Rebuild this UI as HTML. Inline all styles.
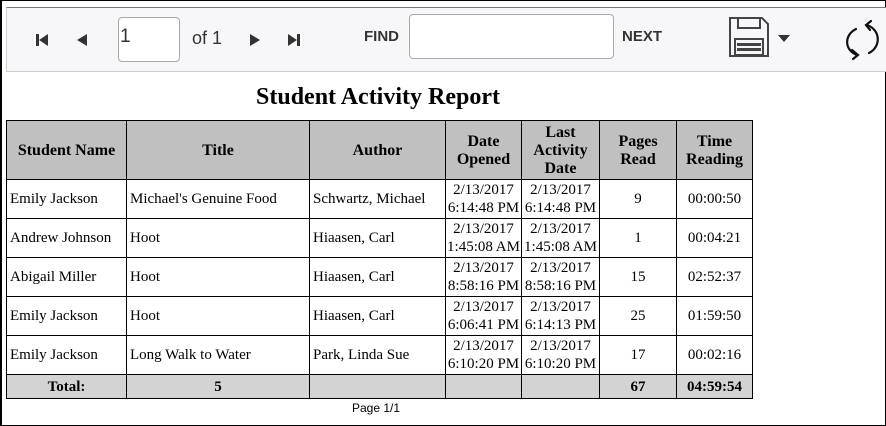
<!DOCTYPE html>
<html><head><meta charset="utf-8"><style>
*{margin:0;padding:0;box-sizing:border-box}
body{width:886px;height:426px;background:#fff;position:relative;overflow:hidden;font-family:"Liberation Sans",sans-serif}
.frame{position:absolute;left:0;top:0;width:886px;height:426px;border:1px solid #000;border-left-width:2px}
.tb{position:absolute;left:6px;top:7px;width:880px;height:65px;background:#f7f7f9;border-top:1px solid #777;border-left:1px solid #ccc;border-bottom:1px solid #ccc}
.ab{position:absolute}
.inp{position:absolute;background:#fff;border:1px solid #aaa;border-radius:4px}
.lbl{position:absolute;font-weight:bold;font-size:15px;color:#333}
h1{position:absolute;left:0;width:756px;top:84px;text-align:center;font:bold 24px "Liberation Serif",serif;color:#000}
table{position:absolute;left:6px;top:120px;border-collapse:collapse;table-layout:fixed;font:15px/18px "Liberation Serif",serif;color:#000}
td,th{border:1px solid #000;padding:0 3px;overflow:hidden;white-space:nowrap}
th{background:#c0c0c0;height:59px;text-align:center;font-weight:bold;font-size:16px;line-height:18px;padding-top:2px}
td{height:39px}
td.c{text-align:center;padding:0 1px}
tr.t td{background:#d3d3d3;height:24px;font-weight:bold;text-align:center;font-size:15px}
.pg{position:absolute;top:401px;left:352px;font-size:12px;color:#000}
</style></head><body>
<div class="frame"></div>
<div class="tb"></div>
<svg class="ab" style="left:0;top:0" width="886" height="72">
<g fill="#333">
<rect x="36" y="34" width="3" height="12"/><polygon points="48,34 48,46 39,40"/>
<polygon points="87,34 87,46 77,40"/>
<polygon points="250,34 250,46 260,40"/>
<polygon points="288,34 288,46 297,40"/><rect x="297" y="34" width="3" height="12"/>
<polygon points="778,35 790,35 784,42"/>
</g>
<g fill="none" stroke="#444" stroke-width="2">
<path d="M730,18 H762 L768,24 V56 H730 Z"/>
<path d="M738,18 V28 H760 V18"/>
<rect x="735" y="39" width="28" height="16"/>
</g>
<rect x="737" y="43" width="24" height="3" fill="#444"/>
<rect x="737" y="48" width="24" height="3" fill="#444"/>
<g fill="none" stroke="#111" stroke-width="2.2" stroke-linecap="round">
<path d="M856,29 C844,35 844,50 857,55"/>
<path d="M852,50 L858,55 L853,59"/>
<path d="M867,25 C881,30 881,47 869,53"/>
<path d="M871,21 L866,25 L870,30"/>
</g>
</svg>
<div class="inp" style="left:118px;top:17px;width:62px;height:45px"></div>
<div class="ab" style="left:120px;top:26px;font-size:19px;color:#333">1</div>
<div class="ab" style="left:192px;top:28px;font-size:18px;color:#333">of 1</div>
<div class="lbl" style="left:364px;top:28px">FIND</div>
<div class="inp" style="left:409px;top:14px;width:205px;height:45px"></div>
<div class="lbl" style="left:622px;top:28px">NEXT</div>
<h1>Student Activity Report</h1>
<table>
<colgroup><col style="width:120px"><col style="width:183px"><col style="width:136px"><col style="width:76px"><col style="width:78px"><col style="width:77px"><col style="width:76px"></colgroup>
<tr><th>Student Name</th><th>Title</th><th>Author</th><th>Date<br>Opened</th><th>Last<br>Activity<br>Date</th><th>Pages<br>Read</th><th>Time<br>Reading</th></tr>
<tr><td>Emily Jackson</td><td>Michael's Genuine Food</td><td>Schwartz, Michael</td><td class="c">2/13/2017<br>6:14:48 PM</td><td class="c">2/13/2017<br>6:14:48 PM</td><td class="c">9</td><td class="c">00:00:50</td></tr>
<tr><td>Andrew Johnson</td><td>Hoot</td><td>Hiaasen, Carl</td><td class="c">2/13/2017<br>1:45:08 AM</td><td class="c">2/13/2017<br>1:45:08 AM</td><td class="c">1</td><td class="c">00:04:21</td></tr>
<tr><td>Abigail Miller</td><td>Hoot</td><td>Hiaasen, Carl</td><td class="c">2/13/2017<br>8:58:16 PM</td><td class="c">2/13/2017<br>8:58:16 PM</td><td class="c">15</td><td class="c">02:52:37</td></tr>
<tr><td>Emily Jackson</td><td>Hoot</td><td>Hiaasen, Carl</td><td class="c">2/13/2017<br>6:06:41 PM</td><td class="c">2/13/2017<br>6:14:13 PM</td><td class="c">25</td><td class="c">01:59:50</td></tr>
<tr><td>Emily Jackson</td><td>Long Walk to Water</td><td>Park, Linda Sue</td><td class="c">2/13/2017<br>6:10:20 PM</td><td class="c">2/13/2017<br>6:10:20 PM</td><td class="c">17</td><td class="c">00:02:16</td></tr>
<tr class="t"><td>Total:</td><td>5</td><td></td><td></td><td></td><td>67</td><td>04:59:54</td></tr>
</table>
<div class="pg">Page 1/1</div>
</body></html>
